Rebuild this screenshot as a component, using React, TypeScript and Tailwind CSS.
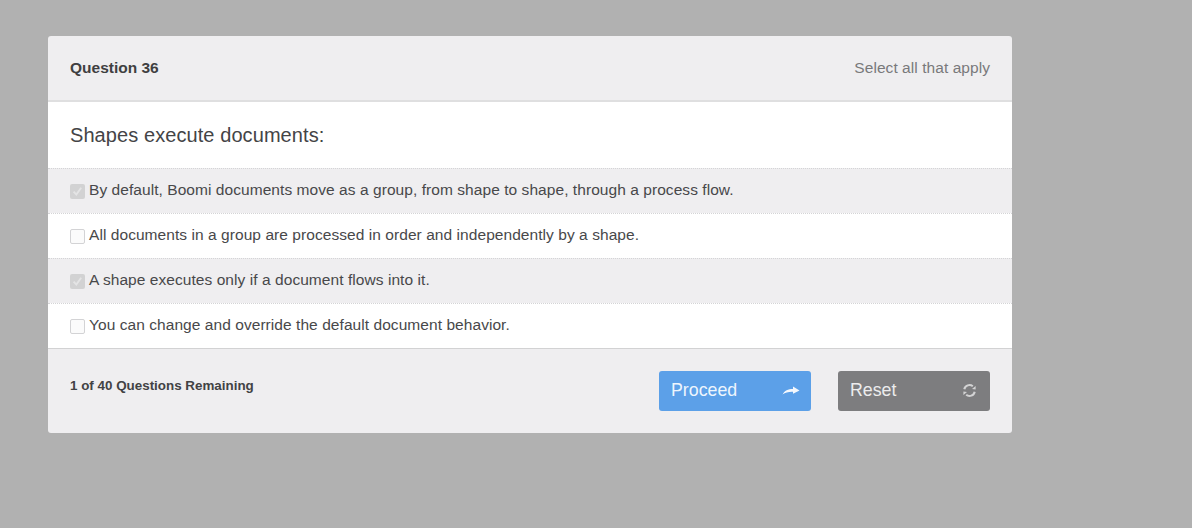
const answers = [
  { text: "By default, Boomi documents move as a group, from shape to shape, through a process flow.", checked: true },
  { text: "All documents in a group are processed in order and independently by a shape.", checked: false },
  { text: "A shape executes only if a document flows into it.", checked: true },
  { text: "You can change and override the default document behavior.", checked: false },
];

function AnswerRow({ text, checked, shaded }: { text: string; checked: boolean; shaded: boolean }) {
  return (
    <div
      className={`flex h-[45px] items-center border-t border-dotted border-[#d4d4d6] pl-[22px] ${shaded ? "bg-[#efeef0]" : "bg-white"}`}
    >
      {checked ? (
        <span className="flex h-[15px] w-[15px] items-center justify-center rounded-[2px] bg-[#d2d2d3]">
          <svg width="11" height="11" viewBox="0 0 11 11" fill="none">
            <path d="M1.6 5.6 L4.3 8.6 L9.2 1.8" stroke="#e4e4e5" strokeWidth="1.9" />
          </svg>
        </span>
      ) : (
        <span className="h-[15px] w-[15px] rounded-[2px] border border-[#d3d3d5] bg-[#fbfbfb]" />
      )}
      <span className="-mt-[2px] ml-[4px] text-[15.5px] tracking-[0.06px] text-[#48484a]">{text}</span>
    </div>
  );
}

export default function App() {
  return (
    <div className="h-[528px] w-[1192px] bg-[#b1b1b1] pl-[48px] pt-[36px] font-['Liberation_Sans',Arial,sans-serif]">
      <div className="w-[964px] overflow-hidden rounded-[3px] bg-[#efeef0]">
        {/* Header */}
        <div className="flex h-[66px] items-center justify-between border-b-2 border-[#dfdfe0] px-[22px]">
          <span className="text-[15.5px] font-bold text-[#3f3f41]">Question 36</span>
          <span className="text-[15.5px] tracking-[0.06px] text-[#79797b]">Select all that apply</span>
        </div>

        {/* Question */}
        <div className="flex h-[66px] items-center bg-white px-[22px]">
          <h2 className="text-[20px] tracking-[0.08px] text-[#444446]">Shapes execute documents:</h2>
        </div>

        {/* Answers */}
        {answers.map((a, i) => (
          <AnswerRow key={a.text} text={a.text} checked={a.checked} shaded={i % 2 === 0} />
        ))}

        {/* Footer */}
        <div className="flex h-[85px] items-center justify-between border-t border-[#d2d2d3] px-[22px] pb-[1px]">
          <span className="-mt-[9px] text-[13.4px] font-bold text-[#424244]">1 of 40 Questions Remaining</span>
          <div className="flex gap-[27px]">
            <button className="flex h-[40px] w-[152px] items-center justify-between rounded-[3px] bg-[#5ca0e8] pl-[12px] pr-[11px] text-[17.8px] text-[#eef5fd]">
              Proceed
              <svg width="18" height="12" viewBox="0 0 18 12" fill="#f4f8fd">
                <path d="M0.5 9.5 C2.5 5.6 6 4 11 4 L11 1.6 L17.5 5.6 L11 8.8 L11 6.8 C7 6.6 3.5 7.4 0.5 9.5 Z" />
              </svg>
            </button>
            <button className="flex h-[40px] w-[152px] items-center justify-between rounded-[3px] bg-[#7d7d7f] pl-[12px] pr-[13px] text-[17.8px] text-[#ececed]">
              Reset
              <svg width="15" height="15" viewBox="0 0 15 15" fill="none" stroke="#d2d2d3" strokeWidth="2.1">
                <path d="M2.3 6.3 A5.3 5.3 0 0 1 10.8 3.2" />
                <path d="M12.7 8.7 A5.3 5.3 0 0 1 4.2 11.8" />
                <path d="M13.6 3 L13.6 6.6 L10 6 Z" fill="#d2d2d3" stroke="none" />
                <path d="M1.4 12 L1.4 8.4 L5 9 Z" fill="#d2d2d3" stroke="none" />
              </svg>
            </button>
          </div>
        </div>
      </div>
    </div>
  );
}
